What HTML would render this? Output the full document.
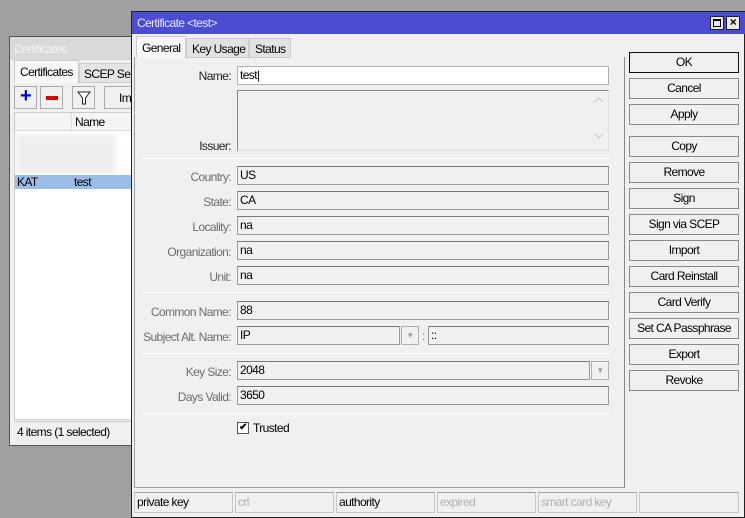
<!DOCTYPE html>
<html><head><style>
*{box-sizing:border-box;margin:0;padding:0}
body{width:745px;height:518px;background:#a0a0a0;position:relative;overflow:hidden;font-family:"Liberation Sans",sans-serif;font-size:12px;letter-spacing:-0.6px;color:#000;white-space:nowrap}
.a{position:absolute}
.lbl{position:absolute;color:#6d6d6d;text-align:right;width:100px;left:131px}
.fld{position:absolute;background:#f0f0f0;border:1px solid #9a9a9a;border-top-color:#7a7a7a;padding-left:2px;line-height:16px;height:19px}
.btn{position:absolute;left:629px;width:110px;height:21px;border:1px solid #8a8a8a;background:#f0f0f0;text-align:center;line-height:19px}
.sep{position:absolute;left:143px;width:466px;height:1px;background:#d8d8d8;border-bottom:1px solid #fff}
.sb{position:absolute;top:492px;height:21px;border:1px solid #c8c8c8;border-top-color:#a0a0a0;padding-left:2px;line-height:19px;color:#b0b0b0}
.dd{position:absolute;width:18px;height:19px;border:1px solid #b0b0b0;background:#f0f0f0;color:#999;font-size:9px;text-align:center;line-height:17px}
</style></head><body>
<div class="a" style="left:9px;top:36px;width:128px;height:410px;background:#f0f0f0;border:1px solid #555"></div>
<div class="a" style="left:10px;top:37px;width:126px;height:23px;background:#d9d9d9;color:#f4f4f4;padding:5px 4px">Certificates</div>
<div class="a" style="left:14px;top:60px;width:65px;height:23px;background:#f7f7f7;border:1px solid #ccc;border-bottom:none;padding:4px 5px">Certificates</div>
<div class="a" style="left:79px;top:63px;width:60px;height:20px;background:#e4e4e4;border:1px solid #ccc;padding:3px 4px;overflow:hidden">SCEP Ser</div>
<div class="a" style="left:14px;top:86px;width:23px;height:23px;border:1px solid #aaa;background:#f0f0f0;color:#0000d0;font-weight:bold;font-size:20px;line-height:19px;text-align:center">+</div>
<div class="a" style="left:40px;top:86px;width:23px;height:23px;border:1px solid #aaa;background:#f0f0f0"><div class="a" style="left:5px;top:9px;width:12px;height:4px;background:#d00"></div></div>
<div class="a" style="left:72px;top:86px;width:23px;height:23px;border:1px solid #aaa;background:#f0f0f0"><svg class="a" style="left:4px;top:3px" width="14" height="16"><path d="M1 2h12l-4.5 6v6h-3v-6z" fill="#fff" stroke="#222"/></svg></div>
<div class="a" style="left:104px;top:86px;width:40px;height:23px;border:1px solid #aaa;background:#f0f0f0;padding:4px 14px">Imp</div>
<div class="a" style="left:14px;top:112px;width:120px;height:308px;background:#fff;border:1px solid #ccc"></div>
<div class="a" style="left:15px;top:113px;width:120px;height:18px;background:#f4f4f4;border-bottom:1px solid #ddd"></div>
<div class="a" style="left:71px;top:113px;height:18px;border-left:1px solid #ddd;padding:2px 3px">Name</div>
<div class="a" style="left:16px;top:134px;width:100px;height:40px;background:#eee;filter:blur(3px)"></div>
<div class="a" style="left:15px;top:175px;width:120px;height:14px;background:#99bde6"></div>
<div class="a" style="left:17px;top:175px">KAT</div><div class="a" style="left:74px;top:175px">test</div>
<div class="a" style="left:14px;top:421px;width:120px;height:20px;border-top:1px solid #ccc;padding:3px 3px">4 items (1 selected)</div>

<div class="a" style="left:131px;top:11px;width:614px;height:507px;background:#f0f0f0;border:1px solid #222"></div>
<div class="a" style="left:132px;top:12px;width:613px;height:22px;background:#4c4cd2;color:#e8e8ff;padding:4px 5px">Certificate &lt;test&gt;</div>
<div class="a" style="left:710px;top:16px;width:14px;height:14px;background:#e8e8e8;border:1px solid #222"><div class="a" style="left:2px;top:2px;width:8px;height:8px;border:1px solid #000;border-top-width:2px"></div></div>
<div class="a" style="left:726px;top:16px;width:14px;height:14px;background:#e8e8e8;border:1px solid #222;font-size:12px;font-weight:bold;line-height:11px;text-align:center">×</div>
<div class="a" style="left:134px;top:57px;width:491px;height:431px;border:1px solid #a0a0a0;border-top:none;border-right-color:#888"></div>
<div class="a" style="left:136px;top:36px;width:50px;height:22px;background:#f7f7f7;border:1px solid #ccc;border-bottom:none;padding:4px 5px">General</div>
<div class="a" style="left:186px;top:38px;width:63px;height:20px;background:#e2e2e2;border:1px solid #ccc;padding:3px 5px">Key Usage</div>
<div class="a" style="left:249px;top:38px;width:42px;height:20px;background:#e2e2e2;border:1px solid #ccc;padding:3px 5px">Status</div>

<div class="lbl" style="top:69px;color:#222">Name:</div>
<div class="fld" style="left:237px;top:66px;width:372px;background:#fff;border-color:#b0b0b0">test|</div>
<div class="a" style="left:237px;top:90px;width:372px;height:61px;border:1px solid #999;border-color:#888 #ddd #ddd #888;background:#f0f0f0"></div>
<svg class="a" style="left:594px;top:96px" width="10" height="46"><path d="M1 6l4-4 4 4M1 38l4 4 4-4" fill="none" stroke="#c4c4c4"/></svg>
<div class="lbl" style="top:139px;color:#222">Issuer:</div>
<div class="sep" style="top:158px"></div>
<div class="lbl" style="top:170px">Country:</div><div class="fld" style="left:237px;top:166px;width:372px">US</div>
<div class="lbl" style="top:195px">State:</div><div class="fld" style="left:237px;top:191px;width:372px">CA</div>
<div class="lbl" style="top:220px">Locality:</div><div class="fld" style="left:237px;top:216px;width:372px">na</div>
<div class="lbl" style="top:245px">Organization:</div><div class="fld" style="left:237px;top:241px;width:372px">na</div>
<div class="lbl" style="top:270px">Unit:</div><div class="fld" style="left:237px;top:266px;width:372px">na</div>
<div class="sep" style="top:292px"></div>
<div class="lbl" style="top:305px">Common Name:</div><div class="fld" style="left:237px;top:301px;width:372px">88</div>
<div class="lbl" style="top:330px;left:120px;width:111px">Subject Alt. Name:</div><div class="fld" style="left:237px;top:326px;width:163px">IP</div>
<div class="dd" style="left:401px;top:326px">▾</div>
<div class="a" style="left:422px;top:329px;color:#666">:</div>
<div class="fld" style="left:428px;top:326px;width:181px">::</div>
<div class="sep" style="top:353px"></div>
<div class="lbl" style="top:365px">Key Size:</div><div class="fld" style="left:237px;top:361px;width:353px">2048</div>
<div class="dd" style="left:591px;top:361px">▾</div>
<div class="lbl" style="top:390px">Days Valid:</div><div class="fld" style="left:237px;top:386px;width:372px">3650</div>
<div class="sep" style="top:413px"></div>
<div class="a" style="left:237px;top:422px;width:12px;height:12px;border:1px solid #555;background:#fff;font-size:10px;line-height:10px;text-align:center;font-weight:bold">✔</div>
<div class="a" style="left:253px;top:421px">Trusted</div>

<div class="btn" style="top:52px;border-color:#111">OK</div>
<div class="btn" style="top:78px">Cancel</div>
<div class="btn" style="top:104px">Apply</div>
<div class="btn" style="top:136px">Copy</div>
<div class="btn" style="top:162px">Remove</div>
<div class="btn" style="top:188px">Sign</div>
<div class="btn" style="top:214px">Sign via SCEP</div>
<div class="btn" style="top:240px">Import</div>
<div class="btn" style="top:266px">Card Reinstall</div>
<div class="btn" style="top:292px">Card Verify</div>
<div class="btn" style="top:318px">Set CA Passphrase</div>
<div class="btn" style="top:344px">Export</div>
<div class="btn" style="top:370px">Revoke</div>

<div class="sb" style="left:134px;width:99px;color:#000">private key</div>
<div class="sb" style="left:235px;width:99px">crl</div>
<div class="sb" style="left:336px;width:99px;color:#000">authority</div>
<div class="sb" style="left:437px;width:99px">expired</div>
<div class="sb" style="left:538px;width:99px">smart card key</div>
<div class="sb" style="left:639px;width:100px"></div>
</body></html>
